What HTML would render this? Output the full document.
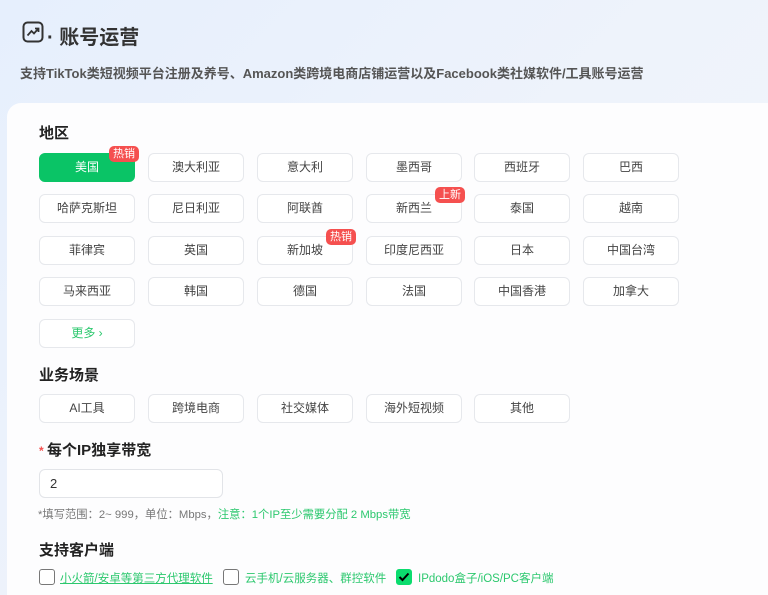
<!DOCTYPE html>
<html><head><meta charset="utf-8"><style>
*{margin:0;padding:0;box-sizing:border-box}
html{width:768px;height:595px;overflow:hidden}
body{width:768px;height:595px;overflow:hidden;background:linear-gradient(135deg,#e6effd 0%,#eef3fb 50%,#f3f5fa 100%);font-family:"Liberation Sans","Noto Sans CJK SC",sans-serif;position:relative}
.a{position:absolute;white-space:nowrap}
.card{position:absolute;left:7px;top:103px;width:761px;height:492px;background:#fdfdfe;border-radius:14px 0 0 0}
.b{position:absolute;width:96px;height:29px;border:1px solid #e6e8ec;border-radius:6px;background:#fff;font-size:12px;color:#444;text-align:center;line-height:27px}
.g{background:#0ac466;border-color:#0ac466;color:#fff}
.tag{position:absolute;height:16px;padding:0 4px;background:#f5504f;color:#fff;font-size:11px;line-height:16px;border-radius:5px}
.h{font-size:15px;font-weight:bold;color:#222}
.cb{position:absolute;width:16px;height:16px;border:1.5px solid #777;border-radius:3px;background:#fff}
</style></head><body>
<svg class="a" style="left:22px;top:21px" width="22" height="22" viewBox="0 0 22 22"><rect x="1.5" y="1.5" width="19" height="19" rx="4" fill="none" stroke="#333" stroke-width="2"/><path d="M5.5 14.5 L9.5 10 L12 12.5 L16 8" fill="none" stroke="#333" stroke-width="1.8"/><path d="M13 7.5 H16.5 V11" fill="none" stroke="#333" stroke-width="1.8"/></svg>
<div class="a" style="left:47px;top:21px;font-size:20px;font-weight:bold;color:#333">·&nbsp;账号运营</div>
<div class="a" style="left:20px;top:63px;font-size:13px;font-weight:bold;color:#555">支持TikTok类短视频平台注册及养号、Amazon类跨境电商店铺运营以及Facebook类社媒软件/工具账号运营</div>
<div class="card"></div>
<div class="a h" style="left:39px;top:122px">地区</div>
<div class="b g" style="left:39px;top:153px">美国</div><div class="tag" style="left:109px;top:146px">热销</div>
<div class="b" style="left:148px;top:153px">澳大利亚</div>
<div class="b" style="left:257px;top:153px">意大利</div>
<div class="b" style="left:366px;top:153px">墨西哥</div>
<div class="b" style="left:474px;top:153px">西班牙</div>
<div class="b" style="left:583px;top:153px">巴西</div>
<div class="b" style="left:39px;top:194px">哈萨克斯坦</div>
<div class="b" style="left:148px;top:194px">尼日利亚</div>
<div class="b" style="left:257px;top:194px">阿联酋</div>
<div class="b" style="left:366px;top:194px">新西兰</div><div class="tag" style="left:435px;top:187px">上新</div>
<div class="b" style="left:474px;top:194px">泰国</div>
<div class="b" style="left:583px;top:194px">越南</div>
<div class="b" style="left:39px;top:236px">菲律宾</div>
<div class="b" style="left:148px;top:236px">英国</div>
<div class="b" style="left:257px;top:236px">新加坡</div><div class="tag" style="left:326px;top:229px">热销</div>
<div class="b" style="left:366px;top:236px">印度尼西亚</div>
<div class="b" style="left:474px;top:236px">日本</div>
<div class="b" style="left:583px;top:236px">中国台湾</div>
<div class="b" style="left:39px;top:277px">马来西亚</div>
<div class="b" style="left:148px;top:277px">韩国</div>
<div class="b" style="left:257px;top:277px">德国</div>
<div class="b" style="left:366px;top:277px">法国</div>
<div class="b" style="left:474px;top:277px">中国香港</div>
<div class="b" style="left:583px;top:277px">加拿大</div>
<div class="b" style="left:39px;top:319px;color:#2cc86e">更多 ›</div>
<div class="a h" style="left:39px;top:364px">业务场景</div>
<div class="b" style="left:39px;top:394px">AI工具</div>
<div class="b" style="left:148px;top:394px">跨境电商</div>
<div class="b" style="left:257px;top:394px">社交媒体</div>
<div class="b" style="left:366px;top:394px">海外短视频</div>
<div class="b" style="left:474px;top:394px">其他</div>
<div class="a h" style="left:39px;top:439px"><span style="color:#f5504f;font-size:12px">* </span>每个IP独享带宽</div>
<div class="a" style="left:39px;top:469px;width:184px;height:29px;border:1px solid #e2e4e8;border-radius:6px;background:#fff;font-size:13px;color:#333;padding-left:10px;line-height:27px">2</div>
<div class="a" style="left:38px;top:506px;font-size:11.3px;color:#777">*填写范围：2~ 999，单位：Mbps，<span style="color:#2cc86e">注意：1个IP至少需要分配 2 Mbps带宽</span></div>
<div class="a h" style="left:39px;top:539px">支持客户端</div>
<div class="cb" style="left:39px;top:569px"></div>
<div class="a" style="left:60px;top:570px;font-size:11.5px;color:#2cc86e;text-decoration:underline">小火箭/安卓等第三方代理软件</div>
<div class="cb" style="left:223px;top:569px"></div>
<div class="a" style="left:245px;top:570px;font-size:11.5px;color:#2cc86e">云手机/云服务器、群控软件</div>
<div class="cb" style="left:396px;top:569px;background:#0bdc6e;border-color:#0bdc6e"><svg width="14" height="14" viewBox="0 0 14 14" style="position:absolute;left:0;top:0"><path d="M2.5 7 L5.5 10 L11.5 3.5" fill="none" stroke="#000" stroke-width="2"/></svg></div>
<div class="a" style="left:418px;top:570px;font-size:11.5px;color:#2cc86e">IPdodo盒子/iOS/PC客户端</div>
</body></html>
